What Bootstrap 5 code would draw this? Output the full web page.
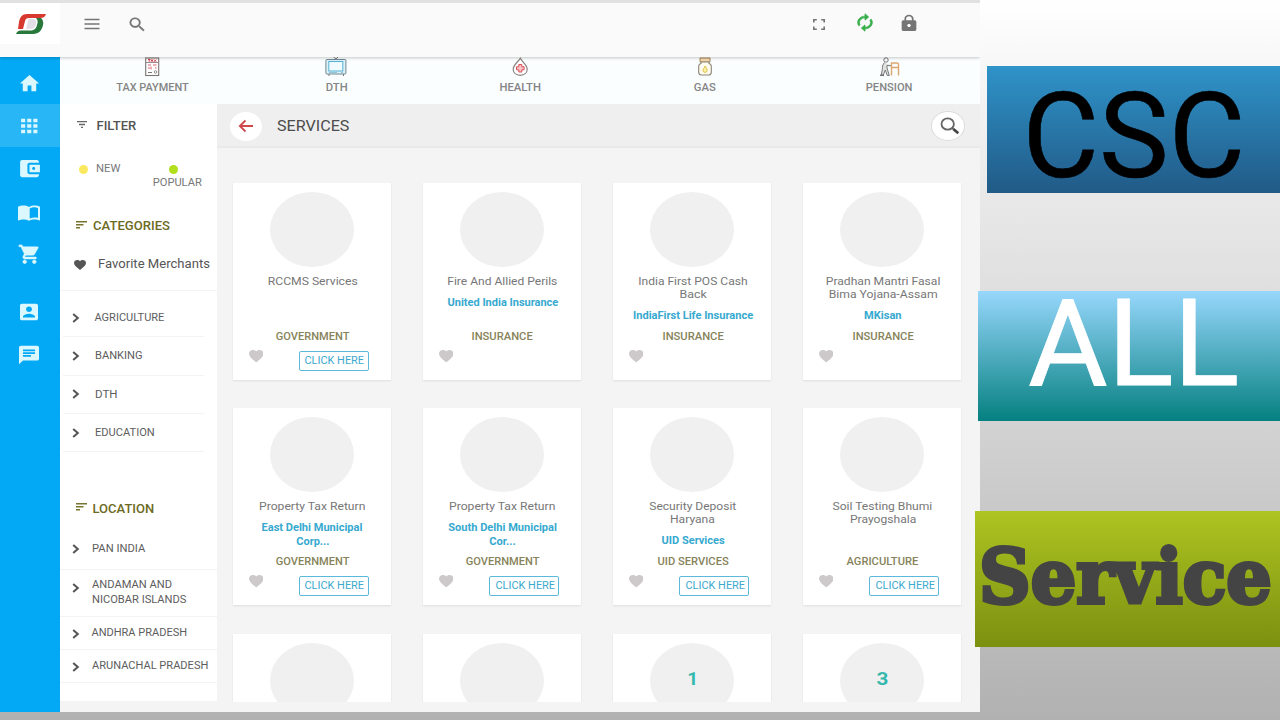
<!DOCTYPE html>
<html lang="en">
<head>
<meta charset="utf-8">
<meta name="viewport" content="width=device-width, initial-scale=1">
<title>CSC All Service</title>
<link href="https://cdn.jsdelivr.net/npm/bootstrap@5.3.0/dist/css/bootstrap.min.css" rel="stylesheet">
<style>
body{width:1280px;height:720px;overflow:hidden;font-family:Roboto,"Liberation Sans",sans-serif;background:linear-gradient(#fff,#f7f7f7 9%,#e8e8e8 28%,#d0d0d0 62%,#b1b1b1);color:#666}
svg{display:block;flex:none}
.app{width:980px;height:712px;background:#f4f4f4;overflow:hidden}
.topbar{height:57px;background:#fafafa;border-top:3px solid #e1e1e1;box-shadow:0 1px 3px rgba(0,0,0,.22);z-index:2;color:#757575}
.tools{height:42px}
.logo{width:60px;height:41px;background:#fff}
.rail{width:60px;background:#03a9f4;color:#dcf8ff;padding-top:4px}
.rail a{height:43px;color:inherit;padding-right:2px}
.rail a.on{background:#29b6f6}
.quick{height:47px;background:#fafeff}
.quick a{width:184.2px;color:#858585;font-size:11px;font-weight:500;line-height:14px}
.quick svg{height:20px;margin:0 0 3.6px}
.fit{display:inline-block;white-space:nowrap}
.fl{transform-origin:left center}
.side{width:157px;height:597px;background:#fff;overflow:hidden}
.side .h{height:43px}
.side .ttl{height:42px;font-size:13px;font-weight:500;color:#6c6a22;padding-left:16px}
.side .ttl svg{margin-right:5.5px;margin-top:-3px}
.legend{height:58px;font-size:11px;line-height:14px;color:#777}
.dot{width:9px;height:9px;border-radius:50%}
.fav{height:44px;padding:0 0 8px 13px;border-bottom:1px solid #f4f4f4;font-size:12.5px;color:#555}
.rowi{padding-left:12px;font-size:11px;line-height:14.5px;color:#5d5d5d;border-bottom:1px solid #f3f3f3}
.cats{margin:8px 13px 35px 3px}
.cats .rowi{height:38.33px;padding-left:9px}
.cats .rowi .fit{margin-top:1px}
.locs .fit{margin-top:.6px}
.main{width:763px;height:597.5px;overflow:hidden}
.bar{height:44px;background:#efefef;border-bottom:2px solid #e9e9e9;padding-left:13px;padding-right:15px;font-size:15px;color:#4c4c4c}
.bar>*{margin-top:2px}
.back{width:32px;height:29px;border-radius:50%;background:#fff;color:#d0484a}
.find{width:34px;height:30px;border-radius:50%;background:#fff;border:1px solid #dcdcdc}
.tiles{display:grid;grid-template-columns:repeat(4,158.5px);grid-auto-rows:197px;column-gap:31.6px;row-gap:28.3px;padding:35px 0 0 15.7px}
.tile{background:#fff;box-shadow:0 1px 2px rgba(0,0,0,.09);padding-top:9px;font-size:11px}
.tile .fit{position:relative;left:.5px}
.pic{width:84px;height:75px;border-radius:50%;background:#f0f0f0;color:#35b8ae;font-size:19px;font-weight:700;padding-bottom:1px}
.info{height:63px;padding-top:7.5px;line-height:13px;color:#777}
.who{margin-top:8px;line-height:14.5px;font-weight:700;font-size:10.5px;color:#36a9cf}
.kind{line-height:14px;font-weight:500;color:#87835a}
.act{padding-left:16px;color:#cdc9ca;margin-top:7px}
.go{margin-left:36px;width:70px;height:20px;border:1px solid #5bb9dc;border-radius:2px;color:#3ca9ce;font-size:10px;line-height:17.5px;padding:0}
.banner{line-height:1;text-align:center}
.b1{margin:66px 0 0 7px;height:126.5px;background:linear-gradient(#2f93c9,#215a87)}
.b2{margin:98.5px 0 0 -2px;height:130px;background:linear-gradient(#97d7fc,#058080);padding-left:9px}
.b3{margin:90px 0 0 -5px;height:136px;background:linear-gradient(#adc421,#7c9010)}
.b1 .fit{font-size:118px;color:#000;margin-top:12px;-webkit-text-stroke:.6px #000}
.b2 .fit{font-size:121px;color:#fff;margin-top:-7px;-webkit-text-stroke:.8px #fff}
.b3 .fit{font-family:"DejaVu Serif",serif;font-weight:700;font-size:75px;color:#444;-webkit-text-stroke:4px #444;margin:29px 0 0 -4px}
</style>
</head>
<body>
<svg width="0" height="0" class="position-absolute">
<symbol id="heart" viewBox="2 3 20 18.35" preserveAspectRatio="none"><path fill="currentColor" d="M12 21.35l-1.45-1.32C5.4 15.36 2 12.28 2 8.5 2 5.42 4.42 3 7.5 3c1.74 0 3.41.81 4.5 2.09C13.09 3.81 14.76 3 16.5 3 19.58 3 22 5.42 22 8.5c0 3.78-3.4 6.86-8.55 11.54z"/></symbol>
<symbol id="chev" viewBox="0 0 8 10"><path d="M1.2 1l4.6 4-4.6 4" fill="none" stroke="#555" stroke-width="2"/></symbol>
<symbol id="sort" viewBox="0 0 11 8"><path d="M0 .8h11M0 3.8h7.5M0 6.8h4" stroke="#77752d" stroke-width="1.4"/></symbol>
</svg>
<div class="d-flex">
<div class="app d-flex flex-column flex-shrink-0">
  <header class="topbar d-flex position-relative flex-shrink-0">
    <div class="logo"><svg width="60" height="41" viewBox="0 3 60 41"><path d="M46 14H27c-5 0-7 3-8 8l-1 7h5l2-8c.5-2 1.500-3 4-3h11c3 0 5-1 6-4z" fill="#d8392f"/><path d="M16 34h17c6 0 9-4 10-9 .7-3 0-5-2-7h-5c2 2 2 4 1 7-1 4-3 5.500-7 5.500H21c-3 0-4 1.500-5 3.500z" fill="#27783a"/><path d="M28.500 19h4c3 0 4 2 3.500 5s-2.500 5-6 5h-4z" fill="#e2e0e6"/></svg></div>
    <div class="tools d-flex flex-grow-1 align-items-center">
      <svg class="ms-4" width="16" height="12" viewBox="0 0 16 12"><path d="M.5 1.500h15M.5 6h15M.5 10.500h15" stroke="currentColor" stroke-width="1.500"/></svg>
      <svg style="margin-left:27px" width="20.500" height="19" viewBox="0 0 24 24" preserveAspectRatio="none"><path fill="currentColor" stroke="currentColor" stroke-width=".2" d="M15.500 14h-.79l-.28-.27A6.471 6.471 0 0 0 16 9.500 6.500 6.500 0 1 0 9.500 16c1.610 0 3.090-.59 4.230-1.570l.27.28v.79l5 4.990L20.490 19zm-6 0C7.010 14 5 11.990 5 9.500S7.010 5 9.500 5 14 7.010 14 9.500 11.990 14 9.500 14z"/></svg>
      <svg class="ms-auto" width="12" height="11" viewBox="0 0 12 11"><path d="M.8 3.500V.8h3M8.200.8h3v2.700M11.200 7.500v2.700h-3M3.800 10.200h-3V7.500" fill="none" stroke="currentColor" stroke-width="1.600"/></svg>
      <svg style="margin:-3px 0 0 29px" width="22" height="19" viewBox="0 0 24 24" preserveAspectRatio="none"><path fill="#37ae4a" stroke="#37ae4a" stroke-width=".9" d="M12 6v3l4-4-4-4v3c-4.420 0-8 3.580-8 8 0 1.570.46 3.030 1.240 4.260L6.700 14.800c-.45-.83-.7-1.790-.7-2.800 0-3.310 2.690-6 6-6zm6.760 1.740L17.300 9.200c.44.84.7 1.790.7 2.800 0 3.310-2.690 6-6 6v-3l-4 4 4 4v-3c4.420 0 8-3.580 8-8 0-1.570-.46-3.030-1.240-4.260z"/></svg>
      <svg style="margin:-2px 60px 0 22px" width="22" height="18.500" viewBox="0 0 24 24" preserveAspectRatio="none"><path fill="currentColor" d="M18 8h-1V6c0-2.760-2.240-5-5-5S7 3.240 7 6v2H6c-1.100 0-2 .9-2 2v10c0 1.100.9 2 2 2h12c1.100 0 2-.9 2-2V10c0-1.100-.9-2-2-2zm-6 9c-1.100 0-2-.9-2-2s.9-2 2-2 2 .9 2 2-.9 2-2 2zm3.100-9H8.900V6c0-1.710 1.390-3.100 3.100-3.100 1.710 0 3.100 1.390 3.100 3.100z"/></svg>
    </div>
  </header>
  <div class="d-flex flex-grow-1">
    <nav class="rail d-flex flex-column flex-shrink-0">
      <a class="d-flex align-items-center justify-content-center"><svg width="23" height="23" viewBox="0 0 24 24" style="margin-top:1px"><path fill="currentColor" d="M10 20v-6h4v6h5v-8h3L12 3 2 12h3v8z"/></svg></a>
      <a class="on d-flex align-items-center justify-content-center"><svg width="24.500" height="22" viewBox="0 0 24 24" preserveAspectRatio="none"><path fill="currentColor" d="M4 8h4V4H4zm6 12h4v-4h-4zm-6 0h4v-4H4zm0-6h4v-4H4zm6 0h4v-4h-4zm6-10v4h4V4zm-6 4h4V4h-4zm6 6h4v-4h-4zm0 6h4v-4h-4z"/></svg></a>
      <a class="d-flex align-items-center justify-content-center"><svg width="25" height="23" viewBox="0 0 24 24" preserveAspectRatio="none"><path fill="currentColor" d="M21 18v1c0 1.100-.9 2-2 2H5c-1.110 0-2-.9-2-2V5c0-1.100.89-2 2-2h14c1.100 0 2 .9 2 2v1h-9c-1.110 0-2 .9-2 2v8c0 1.100.89 2 2 2zm-9-2h10V8H12zm4-2.500c-.83 0-1.500-.67-1.500-1.500s.67-1.500 1.500-1.500 1.500.67 1.500 1.500-.67 1.500-1.500 1.500z"/></svg></a>
      <a class="d-flex align-items-center justify-content-center"><svg width="22" height="16" viewBox="0 0 22 16" style="margin-top:2px"><path fill="currentColor" d="M11 2C9 .8 7.500.4 5.500.4S1.500.9 0 1.700V15c0 .4.4.5.6.4 1.600-.7 3-.9 4.900-.9 2 0 4 .3 5.500 1.300 1.500-1 3.500-1.300 5.500-1.300 1.900 0 3.300.2 4.900.9.300.1.600-.1.600-.4V1.700C20.500.9 18.500.4 16.500.4S13 .8 11 2zm9 10.800c-1.100-.3-2.300-.4-3.500-.4-1.700 0-3.200.3-4.800 1V3.500c1.600-.9 3.100-1.200 4.800-1.200 1.200 0 2.400.2 3.500.6z"/></svg></a>
      <a class="d-flex align-items-center justify-content-center"><svg width="23" height="22.500" viewBox="0 0 24 24" preserveAspectRatio="none"><path fill="currentColor" stroke="currentColor" stroke-width=".5" d="M7 18c-1.100 0-1.990.9-1.990 2S5.900 22 7 22s2-.9 2-2-.9-2-2-2zM1 2v2h2l3.600 7.590-1.350 2.450c-.16.28-.25.61-.25.96 0 1.100.9 2 2 2h12v-2H7.420c-.14 0-.25-.11-.25-.25l.03-.12.9-1.630h7.450c.75 0 1.410-.41 1.750-1.030l3.580-6.490A1.003 1.003 0 0 0 20 4H5.210l-.94-2zm16 16c-1.100 0-1.990.9-1.990 2s.89 2 1.990 2 2-.9 2-2-.9-2-2-2z"/></svg></a>
      <a class="d-flex align-items-center justify-content-center" style="margin-top:14px"><svg width="24" height="22" viewBox="0 0 24 24" preserveAspectRatio="none"><path fill="currentColor" d="M3 5v14c0 1.100.89 2 2 2h14c1.100 0 2-.9 2-2V5c0-1.100-.9-2-2-2H5c-1.110 0-2 .9-2 2zm12 4c0 1.660-1.340 3-3 3s-3-1.340-3-3 1.340-3 3-3 3 1.340 3 3zm-9 8c0-2 4-3.100 6-3.100s6 1.100 6 3.100v1H6z"/></svg></a>
      <a class="d-flex align-items-center justify-content-center"><svg width="24" height="22" viewBox="0 0 24 24" preserveAspectRatio="none"><path fill="currentColor" d="M20 2H4c-1.100 0-1.990.9-1.990 2L2 22l4-4h14c1.100 0 2-.9 2-2V4c0-1.100-.9-2-2-2zM6 9h12v2H6zm8 5H6v-2h8zm4-6H6V6h12z"/></svg></a>
    </nav>
    <div class="d-flex flex-column">
      <nav class="quick d-flex">
        <a class="d-flex flex-column align-items-center text-decoration-none"><svg width="22" viewBox="0 0 22 20"><rect x="4.700" y="1" width="13" height="17.500" fill="#fff" stroke="#7d7474" stroke-width="1.100"/><path d="M5 5.500h12.500" stroke="#7d7474" stroke-width=".8"/><path d="M7 2.500h2.500M8.200 2.500v2.300M10 4.800l1-2.300 1 2.300M13 2.500l2.300 2.300M15.300 2.500L13 4.800" stroke="#d33b4c" fill="none"/><path d="M7 8h3M12 8h3.500M7 11h2M14 11h1.500M10 9.500v3" stroke="#d9606c"/><path d="M7 15.500h4" stroke="#777"/><circle cx="14.500" cy="15" r="1.300" fill="none" stroke="#777" stroke-width=".8"/></svg><span class="fit" data-w="72.500">TAX PAYMENT</span></a>
        <a class="d-flex flex-column align-items-center text-decoration-none"><svg width="22" viewBox="0 0 22 20"><path d="M8.500 0L11 2l2-2M4 17v2M18.500 17v2" stroke="#777" fill="none"/><rect x=".9" y="2.500" width="20" height="14.500" rx="1" fill="#dff2fa" stroke="#718792"/><rect x="3.800" y="4.500" width="14" height="9.500" fill="#effbff" stroke="#55b1d2"/><path d="M4 15.500h8M16 15.500h2" stroke="#7db7cb" stroke-width=".8"/></svg><span class="fit" data-w="21.500">DTH</span></a>
        <a class="d-flex flex-column align-items-center text-decoration-none"><svg width="22" viewBox="0 0 22 20"><path d="M11.300 1.200C9 5 4.200 8 4.200 12.300c0 3.600 3 6 7 6s7-2.400 7-6C18.200 8 13.500 5 11.300 1.200z" fill="#fff" stroke="#8d8282" stroke-width="1.200"/><path d="M9.800 7.500h3v2.300h2.300v3h-2.300V15h-3v-2.200H7.500v-3h2.300z" fill="#f7c6c8" stroke="#d94f56"/></svg><span class="fit" data-w="41">HEALTH</span></a>
        <a class="d-flex flex-column align-items-center text-decoration-none"><svg width="22" viewBox="0 0 22 20"><path d="M6 1h10v4H6z" fill="#f4d9ae" stroke="#a98759"/><path d="M7 5v1.500C5 7 4.700 8 4.700 9.500V15c0 2 1 2.800 2.500 3h7.600c1.500-.2 2.500-1 2.500-3V9.500c0-1.500-.3-2.500-2.300-3V5z" fill="#fffcef" stroke="#8b8579" stroke-width="1.100"/><path d="M11 9c0 2-2 2.500-2 4.300 0 1.200.8 2 2.100 2s2-.8 2-2C13.100 11.600 12 11 11 9z" fill="#fff4a6" stroke="#d9bd44"/></svg><span class="fit" data-w="21.500">GAS</span></a>
        <a class="d-flex flex-column align-items-center text-decoration-none"><svg width="22" viewBox="0 0 22 20"><circle cx="8" cy="3" r="2.200" fill="none" stroke="#777"/><path d="M6.500 5.500c-2 2-2 4-2.200 7l-1 5.500h2l2-5 2 5.500h2L9 11V8.500l5 .3" fill="#dfe3e0" stroke="#777"/><path d="M2 18.300h4" stroke="#777" stroke-width="1.500"/><path d="M13.500 18.500V6h5.500c1 0 1.500.5 1.500 1.500v11M13.500 10.500h7" fill="none" stroke="#dda66e" stroke-width="1.400"/></svg><span class="fit" data-w="46.500">PENSION</span></a>
      </nav>
      <div class="d-flex">
        <aside class="side">
          <div class="h d-flex align-items-center" style="padding-left:17px;font-size:13px;font-weight:500;color:#555"><svg width="10" height="7" viewBox="0 0 10 7" style="margin:-3px 9.500px 0 0"><path d="M0 .7h10M2 3.500h6M4 6.300h2" stroke="#666" stroke-width="1.300"/></svg><span class="fit fl" data-w="40">FILTER</span></div>
          <div class="legend d-flex">
            <div class="d-flex" style="width:93px;padding:14.500px 0 0 19px"><i class="dot" style="background:#fae95f;margin:3px 8px 0 0"></i><span class="fit fl" data-w="24.500">NEW</span></div>
            <div class="d-flex flex-column align-items-center" style="width:49px;padding-top:17.500px"><i class="dot" style="background:#b1df1c;margin-right:8px"></i><span class="fit" data-w="49.500" style="margin-top:2px">POPULAR</span></div>
          </div>
          <div class="ttl d-flex align-items-center"><svg width="11" height="8"><use href="#sort"/></svg><span class="fit fl" data-w="76.500">CATEGORIES</span></div>
          <div class="fav d-flex align-items-center"><svg width="12" height="10" style="margin:1px 11.500px 0 1px"><use href="#heart"/></svg><span class="fit fl" data-w="112">Favorite Merchants</span></div>
          <div class="cats">
            <div class="rowi d-flex align-items-center"><svg width="8" height="10" style="margin-right:14.500px"><use href="#chev"/></svg><span class="fit fl" data-w="70">AGRICULTURE</span></div>
            <div class="rowi d-flex align-items-center"><svg width="8" height="10" style="margin-right:14.500px"><use href="#chev"/></svg><span class="fit fl" data-w="47.500">BANKING</span></div>
            <div class="rowi d-flex align-items-center"><svg width="8" height="10" style="margin-right:14.500px"><use href="#chev"/></svg><span class="fit fl" data-w="22">DTH</span></div>
            <div class="rowi d-flex align-items-center"><svg width="8" height="10" style="margin-right:14.500px"><use href="#chev"/></svg><span class="fit fl" data-w="59.500">EDUCATION</span></div>
          </div>
          <div class="ttl d-flex align-items-center"><svg width="11" height="8"><use href="#sort"/></svg><span class="fit fl" data-w="62">LOCATION</span></div>
          <div class="locs">
          <div class="rowi d-flex align-items-center" style="height:40.300px"><svg width="8" height="10" style="margin-right:11.500px"><use href="#chev"/></svg><span class="fit fl" data-w="53">PAN INDIA</span></div>
          <div class="rowi d-flex align-items-center" style="height:47px"><svg width="8" height="10" style="margin:-10px 11.500px 0 0"><use href="#chev"/></svg><div class="d-flex flex-column align-items-start"><span class="fit fl" data-w="80">ANDAMAN AND</span><span class="fit fl" data-w="94">NICOBAR ISLANDS</span></div></div>
          <div class="rowi d-flex align-items-center" style="height:33px"><svg width="8" height="10" style="margin:3px 11.500px 0 0"><use href="#chev"/></svg><span class="fit fl" data-w="96">ANDHRA PRADESH</span></div>
          <div class="rowi d-flex align-items-center" style="height:33px"><svg width="8" height="10" style="margin:3px 11.500px 0 0"><use href="#chev"/></svg><span class="fit fl" data-w="116.500">ARUNACHAL PRADESH</span></div>
          </div>
        </aside>
        <main class="main">
          <div class="bar d-flex align-items-center">
            <div class="back d-flex align-items-center justify-content-center"><svg width="16" height="14" viewBox="0 0 16 14"><path d="M15 7H2M7.500 1.500L1.800 7l5.700 5.500" fill="none" stroke="currentColor" stroke-width="1.800"/></svg></div>
            <span class="fit fl" data-w="72" style="margin-left:15px">SERVICES</span>
            <div class="find ms-auto d-flex align-items-center justify-content-center"><svg width="20" height="18" viewBox="0 0 20 18" style="margin-left:3px"><ellipse cx="7.700" cy="7" rx="6.200" ry="5.700" fill="none" stroke="#666" stroke-width="1.800"/><path d="M12 11l2 1.800" stroke="#555" stroke-width="1.500"/><path d="M13.300 11.900l5 4.400" stroke="#444" stroke-width="2.700"/></svg></div>
          </div>
          <div class="tiles" id="tiles"></div>
        </main>
      </div>
    </div>
  </div>
</div>
<div class="d-flex flex-column flex-grow-1 position-relative">
  <div class="banner b1"><span class="fit" data-w="223">CSC</span></div>
  <div class="banner b2"><span class="fit" data-w="211">ALL</span></div>
  <div class="banner b3 d-flex justify-content-center"><span class="fit" data-w="293">Service</span></div>
</div>
</div>
<script src="https://cdn.jsdelivr.net/npm/bootstrap@5.3.0/dist/js/bootstrap.bundle.min.js"></script>
<script>
// Each line of text is [text, rendered width]
const services = [
  {t:[['RCCMS Services',89.5]], w:[], k:['GOVERNMENT',73.5], go:1},
  {t:[['Fire And Allied Perils',110.5]], w:[['United India Insurance',111]], k:['INSURANCE',61]},
  {t:[['India First POS Cash',109.5],['Back',27]], w:[['IndiaFirst Life Insurance',120]], k:['INSURANCE',61]},
  {t:[['Pradhan Mantri Fasal',114.5],['Bima Yojana-Assam',108.5]], w:[['MKisan',38]], k:['INSURANCE',61]},
  {t:[['Property Tax Return',106]], w:[['East Delhi Municipal',101],['Corp...',33.5]], k:['GOVERNMENT',73.5], go:1},
  {t:[['Property Tax Return',106]], w:[['South Delhi Municipal',108.5],['Cor...',26.5]], k:['GOVERNMENT',73.5], go:1},
  {t:[['Security Deposit',87.5],['Haryana',45]], w:[['UID Services',63]], k:['UID SERVICES',71], go:1},
  {t:[['Soil Testing Bhumi',100],['Prayogshala',66]], w:[], k:['AGRICULTURE',72], go:1},
  {}, {}, {n:['1',11]}, {n:['3',12]}
];
const line = ([text, w]) => `<span class="fit" data-w="${w}">${text}</span>`;
document.getElementById('tiles').innerHTML = services.map(s => `
  <div class="tile">
    <div class="pic mx-auto d-flex align-items-center justify-content-center">${s.n ? line(s.n) : ''}</div>
    ${s.t ? `<div class="info text-center"><div class="d-flex flex-column align-items-center">${s.t.map(line).join('')}</div>
    <div class="who d-flex flex-column align-items-center">${s.w.map(line).join('')}</div></div>
    <div class="kind d-flex justify-content-center">${line(s.k)}</div>
    <div class="act d-flex"><svg width="14.5" height="12.5" style="margin-top:-1px"><use href="#heart"/></svg>
    ${s.go ? `<button class="go btn d-flex justify-content-center">${line(['CLICK HERE',60])}</button>` : ''}</div>` : ''}
  </div>`).join('');
document.querySelectorAll('[data-w]').forEach(e => {
  e.style.transform = `scaleX(${e.dataset.w / e.offsetWidth})`;
});
</script>
</body>
</html>
